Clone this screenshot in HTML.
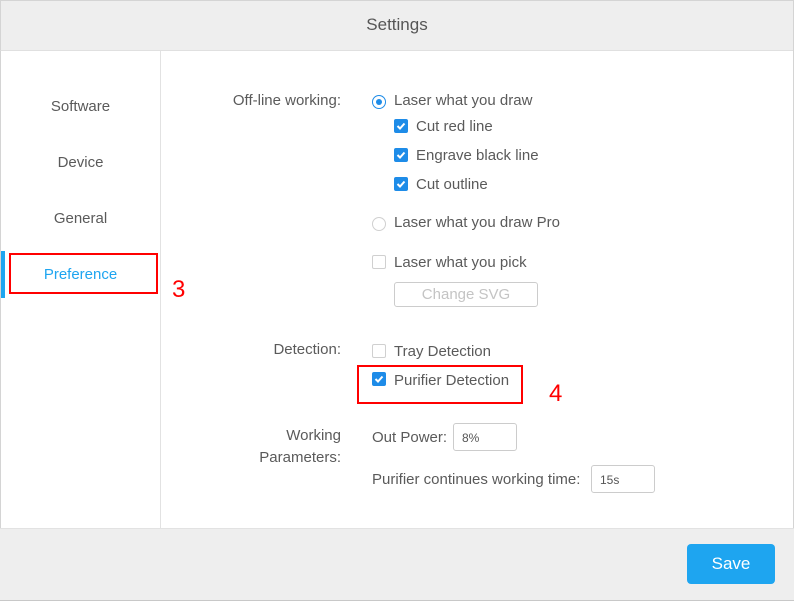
<!DOCTYPE html>
<html><head><style>
*{margin:0;padding:0;box-sizing:border-box}
body{width:794px;height:601px;background:#fff;font-family:"Liberation Sans",sans-serif;font-size:15px;color:#5a5a5a;position:relative;overflow:hidden}
.a{position:absolute;white-space:nowrap}
.r{position:absolute;white-space:nowrap;right:453px;text-align:right}
.cb{position:absolute;width:14px;height:14px;border-radius:2px;background:#1e8ce8}
.cb svg{position:absolute;left:1px;top:1px}
.ue{position:absolute;width:14px;height:14px;border:1px solid #d0d0d0;border-radius:2px;background:#fff}
.inp{position:absolute;border:1px solid #ccc;border-radius:3px;height:28px;font-size:12px;padding:7px 0 0 8px;color:#555}
</style></head><body>
<div class="a" style="left:0;top:0;width:794px;height:51px;background:#eeeeee;border:1px solid #d4d4d4;border-bottom:1px solid #e0e0e0"></div>
<div class="a" style="left:0;top:15px;width:794px;text-align:center;font-size:17px;color:#555">Settings</div>
<div class="a" style="left:0;top:51px;width:1px;height:550px;background:#d4d4d4"></div>
<div class="a" style="left:793px;top:0;width:1px;height:601px;background:#d4d4d4"></div>
<div class="a" style="left:160px;top:51px;width:1px;height:477px;background:#e2e2e2"></div>
<div class="a" style="left:0;top:528px;width:794px;height:73px;background:#eeeeee;border-top:1px solid #e2e2e2;border-bottom:1px solid #c8c8c8"></div>
<div class="a" style="left:0;top:98px;width:161px;text-align:center">Software</div>
<div class="a" style="left:0;top:154px;width:161px;text-align:center">Device</div>
<div class="a" style="left:0;top:210px;width:161px;text-align:center">General</div>
<div class="a" style="left:1px;top:251px;width:4px;height:47px;background:#1ea5f0"></div>
<div class="a" style="left:9px;top:253px;width:149px;height:41px;border:2px solid #f00"></div>
<div class="a" style="left:0;top:266px;width:161px;text-align:center;color:#1ea5f0">Preference</div>
<div class="a" style="left:172px;top:276px;font-size:24px;color:#f00">3</div>

<div class="r" style="top:92px">Off-line working:</div>
<div class="a" style="left:372px;top:95px;width:14px;height:14px;border:1px solid #1e8ce8;border-radius:50%"></div>
<div class="a" style="left:376px;top:99px;width:6px;height:6px;background:#1e8ce8;border-radius:50%"></div>
<div class="a" style="left:394px;top:92px">Laser what you draw</div>
<div class="cb" style="left:394px;top:119px"><svg width="12" height="12"><path d="M2.5 6 L5 8.5 L9.5 3.5" stroke="#fff" stroke-width="2" fill="none"/></svg></div>
<div class="a" style="left:416px;top:118px">Cut red line</div>
<div class="cb" style="left:394px;top:148px"><svg width="12" height="12"><path d="M2.5 6 L5 8.5 L9.5 3.5" stroke="#fff" stroke-width="2" fill="none"/></svg></div>
<div class="a" style="left:416px;top:147px">Engrave black line</div>
<div class="cb" style="left:394px;top:177px"><svg width="12" height="12"><path d="M2.5 6 L5 8.5 L9.5 3.5" stroke="#fff" stroke-width="2" fill="none"/></svg></div>
<div class="a" style="left:416px;top:176px">Cut outline</div>
<div class="a" style="left:372px;top:217px;width:14px;height:14px;border:1px solid #d0d0d0;border-radius:50%"></div>
<div class="a" style="left:394px;top:214px">Laser what you draw Pro</div>
<div class="ue" style="left:372px;top:255px"></div>
<div class="a" style="left:394px;top:254px">Laser what you pick</div>
<div class="a" style="left:394px;top:282px;width:144px;height:25px;border:1px solid #ccc;border-radius:3px;text-align:center;padding-top:3px;color:#c4c4c4">Change SVG</div>

<div class="r" style="top:341px">Detection:</div>
<div class="ue" style="left:372px;top:344px"></div>
<div class="a" style="left:394px;top:343px">Tray Detection</div>
<div class="a" style="left:357px;top:365px;width:166px;height:39px;border:2px solid #f00"></div>
<div class="cb" style="left:372px;top:372px"><svg width="12" height="12"><path d="M2.5 6 L5 8.5 L9.5 3.5" stroke="#fff" stroke-width="2" fill="none"/></svg></div>
<div class="a" style="left:394px;top:372px">Purifier Detection</div>
<div class="a" style="left:549px;top:380px;font-size:24px;color:#f00">4</div>

<div class="r" style="top:427px">Working</div>
<div class="r" style="top:449px">Parameters:</div>
<div class="a" style="left:372px;top:429px">Out Power:</div>
<div class="inp" style="left:453px;top:423px;width:64px">8%</div>
<div class="a" style="left:372px;top:471px">Purifier continues working time:</div>
<div class="inp" style="left:591px;top:465px;width:64px">15s</div>

<div class="a" style="left:687px;top:544px;width:88px;height:40px;background:#1ea5f0;border-radius:4px;color:#fff;font-size:17px;text-align:center;padding-top:10px">Save</div>
</body></html>
